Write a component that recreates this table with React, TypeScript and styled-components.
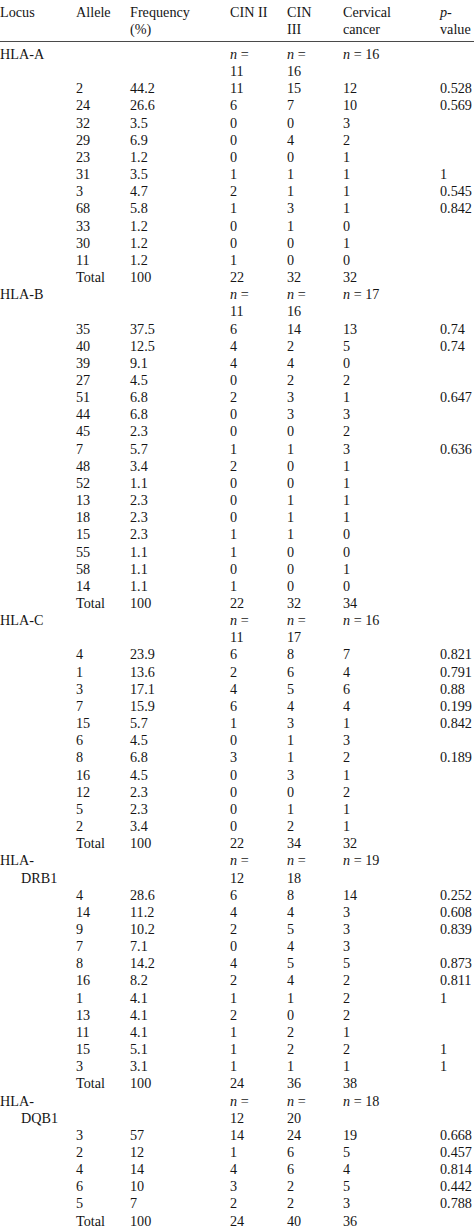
import React from 'react';
import styled, { createGlobalStyle } from 'styled-components';

type Row = [string, string, string, string, string, string?];

type Section = {
  locus: string[];
  n: [string, string, string];
  rows: Row[];
  total: [string, string, string, string];
};

const sections: Section[] = [
  {
    locus: ['HLA-A'],
    n: ['11', '16', '16'],
    rows: [
      ['2', '44.2', '11', '15', '12', '0.528'],
      ['24', '26.6', '6', '7', '10', '0.569'],
      ['32', '3.5', '0', '0', '3'],
      ['29', '6.9', '0', '4', '2'],
      ['23', '1.2', '0', '0', '1'],
      ['31', '3.5', '1', '1', '1', '1'],
      ['3', '4.7', '2', '1', '1', '0.545'],
      ['68', '5.8', '1', '3', '1', '0.842'],
      ['33', '1.2', '0', '1', '0'],
      ['30', '1.2', '0', '0', '1'],
      ['11', '1.2', '1', '0', '0'],
    ],
    total: ['100', '22', '32', '32'],
  },
  {
    locus: ['HLA-B'],
    n: ['11', '16', '17'],
    rows: [
      ['35', '37.5', '6', '14', '13', '0.74'],
      ['40', '12.5', '4', '2', '5', '0.74'],
      ['39', '9.1', '4', '4', '0'],
      ['27', '4.5', '0', '2', '2'],
      ['51', '6.8', '2', '3', '1', '0.647'],
      ['44', '6.8', '0', '3', '3'],
      ['45', '2.3', '0', '0', '2'],
      ['7', '5.7', '1', '1', '3', '0.636'],
      ['48', '3.4', '2', '0', '1'],
      ['52', '1.1', '0', '0', '1'],
      ['13', '2.3', '0', '1', '1'],
      ['18', '2.3', '0', '1', '1'],
      ['15', '2.3', '1', '1', '0'],
      ['55', '1.1', '1', '0', '0'],
      ['58', '1.1', '0', '0', '1'],
      ['14', '1.1', '1', '0', '0'],
    ],
    total: ['100', '22', '32', '34'],
  },
  {
    locus: ['HLA-C'],
    n: ['11', '17', '16'],
    rows: [
      ['4', '23.9', '6', '8', '7', '0.821'],
      ['1', '13.6', '2', '6', '4', '0.791'],
      ['3', '17.1', '4', '5', '6', '0.88'],
      ['7', '15.9', '6', '4', '4', '0.199'],
      ['15', '5.7', '1', '3', '1', '0.842'],
      ['6', '4.5', '0', '1', '3'],
      ['8', '6.8', '3', '1', '2', '0.189'],
      ['16', '4.5', '0', '3', '1'],
      ['12', '2.3', '0', '0', '2'],
      ['5', '2.3', '0', '1', '1'],
      ['2', '3.4', '0', '2', '1'],
    ],
    total: ['100', '22', '34', '32'],
  },
  {
    locus: ['HLA-', 'DRB1'],
    n: ['12', '18', '19'],
    rows: [
      ['4', '28.6', '6', '8', '14', '0.252'],
      ['14', '11.2', '4', '4', '3', '0.608'],
      ['9', '10.2', '2', '5', '3', '0.839'],
      ['7', '7.1', '0', '4', '3'],
      ['8', '14.2', '4', '5', '5', '0.873'],
      ['16', '8.2', '2', '4', '2', '0.811'],
      ['1', '4.1', '1', '1', '2', '1'],
      ['13', '4.1', '2', '0', '2'],
      ['11', '4.1', '1', '2', '1'],
      ['15', '5.1', '1', '2', '2', '1'],
      ['3', '3.1', '1', '1', '1', '1'],
    ],
    total: ['100', '24', '36', '38'],
  },
  {
    locus: ['HLA-', 'DQB1'],
    n: ['12', '20', '18'],
    rows: [
      ['3', '57', '14', '24', '19', '0.668'],
      ['2', '12', '1', '6', '5', '0.457'],
      ['4', '14', '4', '6', '4', '0.814'],
      ['6', '10', '3', '2', '5', '0.442'],
      ['5', '7', '2', '2', '3', '0.788'],
    ],
    total: ['100', '24', '40', '36'],
  },
];

const columns = [76, 54, 100, 57, 56, 97, 60];

const GlobalStyle = createGlobalStyle`
  html, body {
    margin: 0;
    padding: 0;
    background: #ffffff;
    overflow: hidden;
  }
`;

const Page = styled.div`
  width: 474px;
  height: 1232px;
  overflow: hidden;
  background: #ffffff;
`;

const Table = styled.table`
  border-collapse: collapse;
  table-layout: fixed;
  width: ${columns.reduce((a, b) => a + b, 0)}px;
  font-family: 'Liberation Serif', 'Times New Roman', serif;
  font-size: 14.2px;
  line-height: 17.16px;
  color: #151515;
`;

const HeadCell = styled.th`
  text-align: left;
  font-weight: normal;
  vertical-align: top;
  padding: 3.5px 0 3.6px 0;
  border-bottom: 1.5px solid #4a4a4a;
`;

const Cell = styled.td<{ $first?: boolean }>`
  text-align: left;
  vertical-align: top;
  padding: ${(p) => (p.$first ? '3.6px' : '0')} 0 0 0;
  white-space: nowrap;
`;

const LocusCell = styled(Cell)`
  white-space: normal;
  padding-left: 21px;
  text-indent: -21px;
`;

const Lines = ({ parts }: { parts: React.ReactNode[] }) => (
  <>
    {parts.map((part, i) => (
      <React.Fragment key={i}>
        {i > 0 && <br />}
        {part}
      </React.Fragment>
    ))}
  </>
);

const N = ({ value, wrap }: { value: string; wrap?: boolean }) => (
  <>
    <i>n</i> ={wrap ? <br /> : ' '}
    {value}
  </>
);

const App = () => (
  <Page>
    <GlobalStyle />
    <Table>
      <colgroup>
        {columns.map((w, i) => (
          <col key={i} style={{ width: w }} />
        ))}
      </colgroup>
      <thead>
        <tr>
          <HeadCell>Locus</HeadCell>
          <HeadCell>Allele</HeadCell>
          <HeadCell>
            <Lines parts={['Frequency', '(%)']} />
          </HeadCell>
          <HeadCell>CIN II</HeadCell>
          <HeadCell>
            <Lines parts={['CIN', 'III']} />
          </HeadCell>
          <HeadCell>
            <Lines parts={['Cervical', 'cancer']} />
          </HeadCell>
          <HeadCell>
            <Lines parts={[<i key="p">p-</i>, 'value']} />
          </HeadCell>
        </tr>
      </thead>
      <tbody>
        {sections.map((s, si) => (
          <React.Fragment key={si}>
            <tr>
              <LocusCell $first={si === 0}>
                <Lines parts={s.locus} />
              </LocusCell>
              <Cell $first={si === 0} />
              <Cell $first={si === 0} />
              <Cell $first={si === 0}>
                <N value={s.n[0]} wrap />
              </Cell>
              <Cell $first={si === 0}>
                <N value={s.n[1]} wrap />
              </Cell>
              <Cell $first={si === 0}>
                <N value={s.n[2]} />
              </Cell>
              <Cell $first={si === 0} />
            </tr>
            {s.rows.map((r, ri) => (
              <tr key={ri}>
                <Cell />
                {r.map((v, vi) => (
                  <Cell key={vi}>{v}</Cell>
                ))}
                {r.length < 6 && <Cell />}
              </tr>
            ))}
            <tr>
              <Cell />
              <Cell>Total</Cell>
              {s.total.map((v, vi) => (
                <Cell key={vi}>{v}</Cell>
              ))}
              <Cell />
            </tr>
          </React.Fragment>
        ))}
      </tbody>
    </Table>
  </Page>
);

export default App;
